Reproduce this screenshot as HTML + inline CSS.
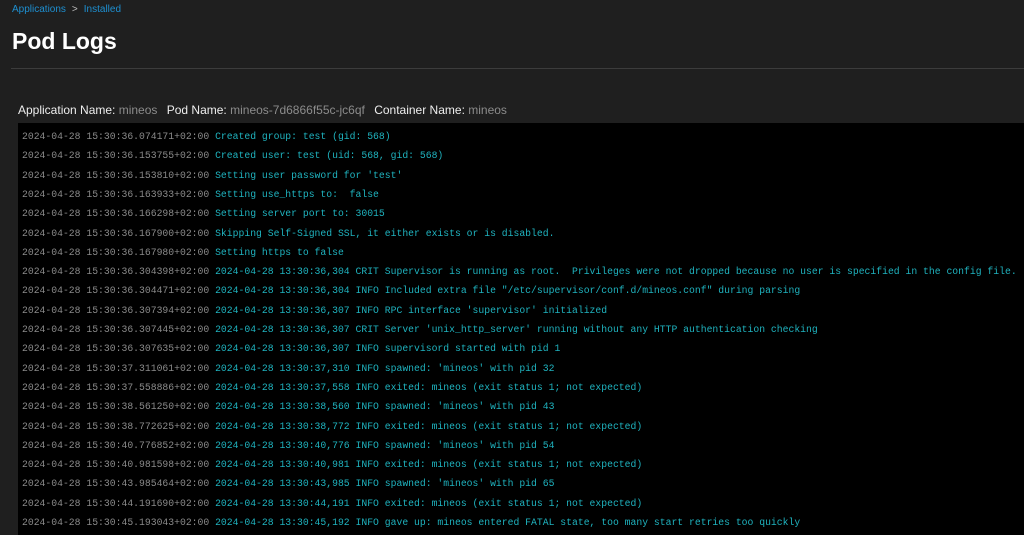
<!DOCTYPE html>
<html><head><meta charset="utf-8"><style>
body{margin:0;background:#1f1f1f;width:1024px;height:535px;overflow:hidden;font-family:"Liberation Sans",sans-serif;}
.bc{position:absolute;left:12px;top:4px;font-size:10px;color:#1e8fd0;}
.bc span{color:#bbb;margin:0 6px;}
h1{position:absolute;left:12px;top:28px;margin:0;font-size:23px;color:#fff;font-weight:bold;}
.hr{position:absolute;left:11px;right:0;top:68px;height:1px;background:#3c3c3c;}
.meta{position:absolute;left:18px;top:103px;font-size:12px;color:#eee;}
.meta i{font-style:normal;color:#8c8c8c;margin-right:6px;}
.log{position:absolute;left:18px;top:123px;right:0;bottom:0;background:#000;}
.l{position:absolute;left:4px;font-family:"Liberation Mono",monospace;font-size:9.75px;white-space:pre;color:#1fb3bf;margin-top:1px;}
.l b{font-weight:normal;color:#8a8a8a;}
</style></head><body>
<div class="bc">Applications<span>&gt;</span>Installed</div>
<h1>Pod Logs</h1>
<div class="hr"></div>
<div class="meta">Application Name: <i>mineos</i> Pod Name: <i>mineos-7d6866f55c-jc6qf</i> Container Name: <i>mineos</i></div>
<div class="log">
<div class="l" style="top:7px"><b>2024-04-28 15:30:36.074171+02:00</b> Created group: test (gid: 568)</div>
<div class="l" style="top:26.3px"><b>2024-04-28 15:30:36.153755+02:00</b> Created user: test (uid: 568, gid: 568)</div>
<div class="l" style="top:45.6px"><b>2024-04-28 15:30:36.153810+02:00</b> Setting user password for 'test'</div>
<div class="l" style="top:64.9px"><b>2024-04-28 15:30:36.163933+02:00</b> Setting use_https to:  false</div>
<div class="l" style="top:84.2px"><b>2024-04-28 15:30:36.166298+02:00</b> Setting server port to: 30015</div>
<div class="l" style="top:103.5px"><b>2024-04-28 15:30:36.167900+02:00</b> Skipping Self-Signed SSL, it either exists or is disabled.</div>
<div class="l" style="top:122.8px"><b>2024-04-28 15:30:36.167980+02:00</b> Setting https to false</div>
<div class="l" style="top:142.1px"><b>2024-04-28 15:30:36.304398+02:00</b> 2024-04-28 13:30:36,304 CRIT Supervisor is running as root.  Privileges were not dropped because no user is specified in the config file.</div>
<div class="l" style="top:161.4px"><b>2024-04-28 15:30:36.304471+02:00</b> 2024-04-28 13:30:36,304 INFO Included extra file "/etc/supervisor/conf.d/mineos.conf" during parsing</div>
<div class="l" style="top:180.7px"><b>2024-04-28 15:30:36.307394+02:00</b> 2024-04-28 13:30:36,307 INFO RPC interface 'supervisor' initialized</div>
<div class="l" style="top:200px"><b>2024-04-28 15:30:36.307445+02:00</b> 2024-04-28 13:30:36,307 CRIT Server 'unix_http_server' running without any HTTP authentication checking</div>
<div class="l" style="top:219.3px"><b>2024-04-28 15:30:36.307635+02:00</b> 2024-04-28 13:30:36,307 INFO supervisord started with pid 1</div>
<div class="l" style="top:238.6px"><b>2024-04-28 15:30:37.311061+02:00</b> 2024-04-28 13:30:37,310 INFO spawned: 'mineos' with pid 32</div>
<div class="l" style="top:257.9px"><b>2024-04-28 15:30:37.558886+02:00</b> 2024-04-28 13:30:37,558 INFO exited: mineos (exit status 1; not expected)</div>
<div class="l" style="top:277.2px"><b>2024-04-28 15:30:38.561250+02:00</b> 2024-04-28 13:30:38,560 INFO spawned: 'mineos' with pid 43</div>
<div class="l" style="top:296.5px"><b>2024-04-28 15:30:38.772625+02:00</b> 2024-04-28 13:30:38,772 INFO exited: mineos (exit status 1; not expected)</div>
<div class="l" style="top:315.8px"><b>2024-04-28 15:30:40.776852+02:00</b> 2024-04-28 13:30:40,776 INFO spawned: 'mineos' with pid 54</div>
<div class="l" style="top:335.1px"><b>2024-04-28 15:30:40.981598+02:00</b> 2024-04-28 13:30:40,981 INFO exited: mineos (exit status 1; not expected)</div>
<div class="l" style="top:354.4px"><b>2024-04-28 15:30:43.985464+02:00</b> 2024-04-28 13:30:43,985 INFO spawned: 'mineos' with pid 65</div>
<div class="l" style="top:373.7px"><b>2024-04-28 15:30:44.191690+02:00</b> 2024-04-28 13:30:44,191 INFO exited: mineos (exit status 1; not expected)</div>
<div class="l" style="top:393px"><b>2024-04-28 15:30:45.193043+02:00</b> 2024-04-28 13:30:45,192 INFO gave up: mineos entered FATAL state, too many start retries too quickly</div>
</div>
</body></html>
